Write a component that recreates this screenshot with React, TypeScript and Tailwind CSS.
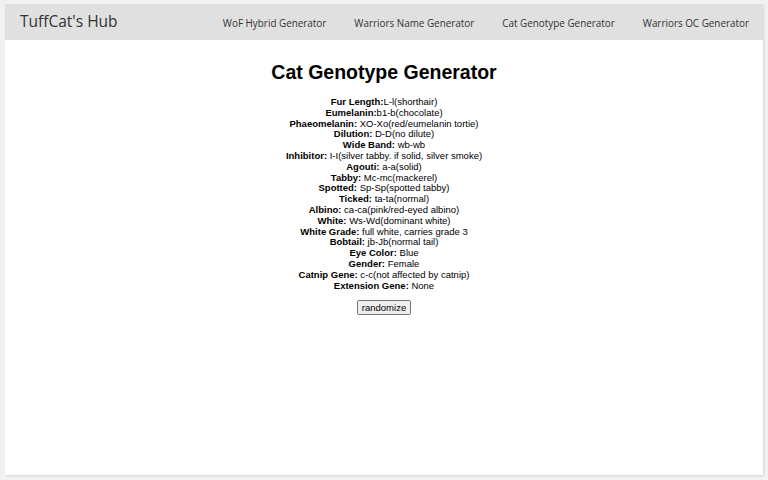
const genes = [
  ['Fur Length:', 'L-l(shorthair)'],
  ['Eumelanin:', 'b1-b(chocolate)'],
  ['Phaeomelanin:', ' XO-Xo(red/eumelanin tortie)'],
  ['Dilution:', ' D-D(no dilute)'],
  ['Wide Band:', ' wb-wb'],
  ['Inhibitor:', ' I-I(silver tabby. if solid, silver smoke)'],
  ['Agouti:', ' a-a(solid)'],
  ['Tabby:', ' Mc-mc(mackerel)'],
  ['Spotted:', ' Sp-Sp(spotted tabby)'],
  ['Ticked:', ' ta-ta(normal)'],
  ['Albino:', ' ca-ca(pink/red-eyed albino)'],
  ['White:', ' Ws-Wd(dominant white)'],
  ['White Grade:', ' full white, carries grade 3'],
  ['Bobtail:', ' jb-Jb(normal tail)'],
  ['Eye Color:', ' Blue'],
  ['Gender:', ' Female'],
  ['Catnip Gene:', ' c-c(not affected by catnip)'],
  ['Extension Gene:', ' None'],
];

const links = ['WoF Hybrid Generator', 'Warriors Name Generator', 'Cat Genotype Generator', 'Warriors OC Generator'];

export default function App() {
  return (
    <div className="h-[480px] bg-[#f1f1f1] pl-[5px] pr-[5px] pt-[4px] pb-[5px]">
      <div className="h-full bg-white flex flex-col shadow-[1px_1px_2px_rgba(0,0,0,0.12)]">
        {/* Header */}
        <header className="h-[36px] bg-[#e0e0e0] flex items-center justify-between pl-[15px] font-['Open_Sans',sans-serif] text-[#333]">
          <span className="text-[15.5px]">TuffCat's Hub</span>
          <nav className="flex pt-[2px]">
            {links.map((l) => (
              <a key={l} href="#" className="px-[14px] text-[9.9px] text-[#333]">
                {l}
              </a>
            ))}
          </nav>
        </header>

        {/* Main */}
        <main className="flex flex-col items-center font-['Liberation_Sans',Arial,sans-serif] text-black">
          <h2 className="mt-[20px] text-[19.5px] leading-[24px] font-bold">Cat Genotype Generator</h2>
          <div className="mt-[13px] text-center text-[9.5px] leading-[10.8px]">
            {genes.map(([k, v]) => (
              <div key={k}>
                <b>{k}</b>
                {v}
              </div>
            ))}
          </div>
          <button className="mt-[9px] px-[4px] h-[15px] text-[9.5px] leading-none bg-[#efefef] border border-[#767676] rounded-[2px]">
            randomize
          </button>
        </main>
      </div>
    </div>
  );
}
